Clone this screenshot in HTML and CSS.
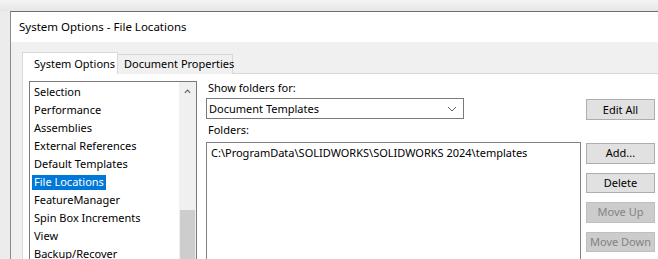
FILE: index.html
```html
<!DOCTYPE html>
<html>
<head>
<meta charset="utf-8">
<link rel="stylesheet" href="styles.css">
</head>
<body>
<div class="screen">
  <div class="window">
    <div class="titlebar">System Options - File Locations</div>
    <div class="dlg">
      <div class="tabs">
        <div class="tab active">System Options</div>
        <div class="tab">Document Properties</div>
      </div>
      <div class="panel">
        <div class="listbox">
          <ul class="items">
            <li><span>Selection</span></li>
            <li><span>Performance</span></li>
            <li><span>Assemblies</span></li>
            <li><span>External References</span></li>
            <li><span>Default Templates</span></li>
            <li class="sel"><span>File Locations</span></li>
            <li><span>FeatureManager</span></li>
            <li><span>Spin Box Increments</span></li>
            <li><span>View</span></li>
            <li><span>Backup/Recover</span></li>
          </ul>
          <div class="vscroll">
            <svg class="up" width="9" height="6" viewBox="0 0 9 6"><path d="M1 5 L4.5 1.5 L8 5" fill="none" stroke="#606060" stroke-width="1.5"/></svg>
            <div class="thumb"></div>
          </div>
        </div>
        <div class="right">
          <div class="lbl lbl1">Show folders for:</div>
          <div class="combo">
            <span>Document Templates</span>
            <svg width="10" height="6" viewBox="0 0 10 6"><path d="M1 1 L5 5 L9 1" fill="none" stroke="#606060" stroke-width="1"/></svg>
          </div>
          <button class="btn">Edit All</button>
          <div class="lbl lbl2">Folders:</div>
          <div class="folders">C:\ProgramData\SOLIDWORKS\SOLIDWORKS 2024\templates</div>
          <div class="btnstack">
            <button class="btn">Add...</button>
            <button class="btn">Delete</button>
            <button class="btn dis">Move Up</button>
            <button class="btn dis">Move Down</button>
          </div>
        </div>
      </div>
    </div>
  </div>
</div>
</body>
</html>
```

FILE: styles.css
```css
html, body {
  margin: 0;
  padding: 0;
}
body {
  font-family: "Noto Sans", "Open Sans", sans-serif;
  font-size: 11px;
  color: #000;
}
.screen {
  width: 658px;
  height: 259px;
  overflow: hidden;
  box-sizing: border-box;
  padding: 11px 0 0 10px;
  background: linear-gradient(to bottom, #f4f4f4 0px, #e6e6e6 11px, #ececec 11px);
}
.window {
  border-left: 1px solid #8a8a8a;
  border-top: 1px solid #6e6e6e;
  background: #f0f0f0;
  height: 260px;
}
.titlebar {
  height: 30px;
  line-height: 30px;
  background: #fff;
  padding-left: 8px;
  font-size: 11.5px;
}
.dlg {
  padding: 10px 0 0 11px;
}
.tabs {
  display: flex;
  align-items: flex-end;
  height: 22px;
  position: relative;
  z-index: 1;
}
.tab {
  box-sizing: border-box;
  white-space: nowrap;
  height: 20px;
  line-height: 18px;
  border: 1px solid #d9d9d9;
  border-bottom: none;
  background: #f0f0f0;
}
.tab.active {
  height: 22px;
  line-height: 22px;
  background: #fff;
  padding: 0 0 0 11px;
  width: 96px;
}
.tab:not(.active) {
  border-left: none;
  width: 115px;
  padding-left: 6px;
}
.panel {
  background: #fff;
  border: 1px solid #d9d9d9;
  border-right: none;
  margin-top: -1px;
  height: 200px;
  display: flex;
  align-items: flex-start;
  padding: 7px 0 0 6px;
}
.listbox {
  width: 168px;
  height: 190px;
  box-sizing: border-box;
  border: 1px solid #7a7a7a;
  display: flex;
  background: #fff;
}
.items {
  list-style: none;
  margin: 0;
  padding: 0 0 0 2px;
  flex: 1;
  white-space: nowrap;
}
.items li {
  height: 18px;
}
.items li span {
  display: inline-block;
  margin-top: 3px;
  height: 15px;
  line-height: 14px;
  padding: 0 2px;
}
.items li.sel span {
  background: #0078d7;
  color: #fff;
}
.vscroll {
  width: 17px;
  background: #f0f0f0;
  display: flex;
  flex-direction: column;
  align-items: center;
}
.up {
  margin-top: 7px;
}
.thumb {
  width: 15px;
  margin-top: 116px;
  height: 80px;
  background: #cdcdcd;
}
.right {
  margin-left: 9px;
  display: grid;
  grid-template-columns: 375px 69px;
  grid-template-rows: 17px 21px 23px auto;
  column-gap: 5px;
}
.lbl {
  grid-column: 1 / 3;
  padding-left: 2px;
}
.lbl1 {
  line-height: 14px;
}
.lbl2 {
  line-height: 22px;
}
.combo {
  box-sizing: border-box;
  width: 258px;
  justify-self: start;
  border: 1px solid #7a7a7a;
  height: 21px;
  display: flex;
  align-items: center;
  justify-content: space-between;
  padding: 0 6px 0 2px;
  background: #fff;
}
.btn {
  box-sizing: border-box;
  font: inherit;
  color: #000;
  width: 69px;
  height: 21px;
  padding: 0;
  margin: 0;
  border: 1px solid #adadad;
  background: #e1e1e1;
  line-height: 18px;
  white-space: nowrap;
}
.right > .btn {
  margin-top: 1px;
}
.btnstack .btn {
  height: 20.5px;
}
.btn.dis {
  background: #cccccc;
  border-color: #bfbfbf;
  color: #838383;
}
.folders {
  box-sizing: border-box;
  border: 1px solid #828282;
  height: 130px;
  padding: 2px 4px;
  line-height: 16px;
}
.btnstack {
  display: flex;
  flex-direction: column;
  gap: 9px;
  padding-top: 1px;
}
```
